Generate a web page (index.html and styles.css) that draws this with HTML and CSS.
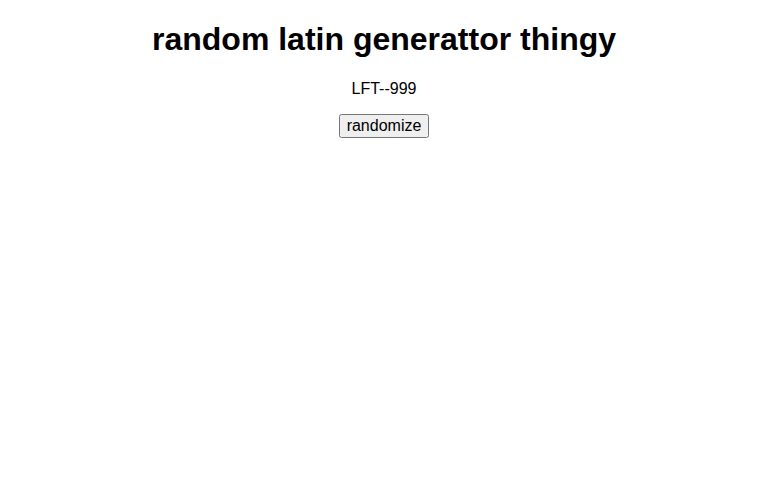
FILE: index.html
```html
<!DOCTYPE html>
<html lang="en">
<head>
    <meta charset="UTF-8" />
    <title>random latin generattor thingy</title>
    <link rel="stylesheet" href="styles.css">
</head>
<body>
    <h1>random latin generattor thingy</h1>
    <p id="output">LFT--999</p>
    <p><button id="randomize">randomize</button></p>
</body>
</html>
```
FILE: styles.css
```css
body {
    font-family: 'Liberation Sans', Arial, sans-serif;
    text-align: center;
    margin: 0 8px 8px;
}
button {
    font-family: 'Liberation Sans', Arial, sans-serif;
    font-size: 16px;
}
```
